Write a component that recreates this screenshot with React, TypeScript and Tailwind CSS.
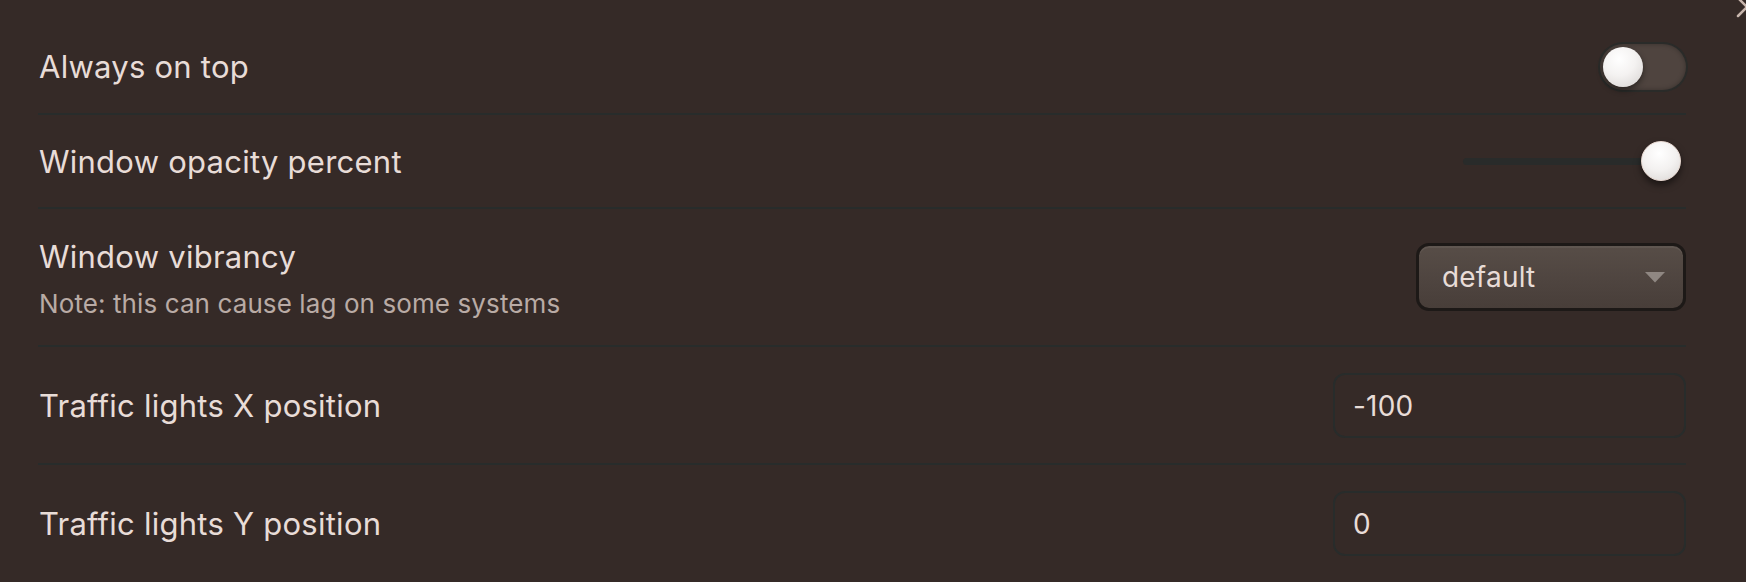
import React from "react";

const font = { fontFamily: "Inter, 'Noto Sans', sans-serif" };

function Toggle() {
  return (
    <div className="relative h-[46px] w-[86px] rounded-full bg-[#4f443f] shadow-[0_0_0_2px_#2a2b29,inset_0_0_5px_rgba(0,0,0,0.3)]">
      <div className="absolute left-[3px] top-[3px] h-[40px] w-[40px] rounded-full bg-[radial-gradient(circle_at_40%_30%,#ffffff_0%,#f4f2f1_45%,#d6d2d0_100%)] shadow-[0_3px_6px_rgba(0,0,0,0.45)]" />
    </div>
  );
}

function Slider() {
  return (
    <div className="relative flex h-[40px] w-[223px] items-center">
      <div className="h-[7px] w-[205px] rounded-full bg-[#292b2a]" />
      <div className="absolute right-[5px] top-[0px] h-[40px] w-[40px] rounded-full border border-[#eadbd4] bg-[radial-gradient(circle_at_45%_30%,#ffffff_0%,#f3f1f0_50%,#d9d5d3_100%)] shadow-[0_4px_7px_rgba(0,0,0,0.5)]" />
    </div>
  );
}

function Dropdown() {
  return (
    <div className="flex h-[68px] w-[270px] items-center justify-between rounded-[13px] border-[3px] border-[#1d1917] bg-[linear-gradient(180deg,#574d47_0%,#4e443f_60%,#483e39_100%)] pl-[23px] pr-[18px] shadow-[inset_0_2px_0_rgba(255,255,255,0.06)]">
      <span className="text-[28px] leading-none tracking-[0.2px] text-[#e8dcd7]" style={font}>default</span>
      <svg width="20" height="11" viewBox="0 0 20 11">
        <polygon points="0,0 20,0 10,10.5" fill="#8f8782" />
      </svg>
    </div>
  );
}

function Input({ value }: { value: string }) {
  return (
    <div className="flex h-[65px] w-[353px] items-center rounded-[12px] border-2 border-[#282c2b] pl-[18px] pt-[2px]">
      <span className="text-[28px] leading-none tracking-[0.2px] text-[#e8dcd7]" style={font}>{value}</span>
    </div>
  );
}

function Name({ children, className = "" }: { children: React.ReactNode; className?: string }) {
  return (
    <div className={"text-[31px] leading-none tracking-[0.25px] text-[#e8dcd7] " + className} style={font}>
      {children}
    </div>
  );
}

export default function App() {
  return (
    <div className="relative h-[582px] w-[1746px] overflow-hidden bg-[#352a27]">
      <svg
        className="absolute right-[-14px] top-[-6px]"
        width="26"
        height="26"
        viewBox="0 0 26 26"
        fill="none"
        stroke="#c8b6ad"
        strokeWidth="2.5"
        strokeLinecap="round"
      >
        <path d="M4 4 L22 22 M22 4 L4 22" />
      </svg>
      <div className="ml-[38px] w-[1648px] pt-[20px]">
        <div className="flex h-[95px] items-center justify-between border-b-2 border-[#282c2b] pl-[1px]">
          <Name>Always on top</Name>
          <Toggle />
        </div>
        <div className="flex h-[94px] items-center justify-between border-b-2 border-[#282c2b] pl-[1px]">
          <Name>Window opacity percent</Name>
          <Slider />
        </div>
        <div className="flex h-[138px] items-center justify-between border-b-2 border-[#282c2b] pl-[1px]">
          <div className="flex flex-col gap-[19px] pt-[4px]">
            <Name>Window vibrancy</Name>
            <div className="text-[26px] leading-none tracking-[0.1px] text-[#b9aba5]" style={font}>
              Note: this can cause lag on some systems
            </div>
          </div>
          <Dropdown />
        </div>
        <div className="flex h-[118px] items-center justify-between border-b-2 border-[#282c2b] pl-[1px]">
          <Name className="pt-[1px]">Traffic lights X position</Name>
          <Input value="-100" />
        </div>
        <div className="flex h-[116px] items-center justify-between pl-[1px]">
          <Name className="pt-[1px]">Traffic lights Y position</Name>
          <Input value="0" />
        </div>
      </div>
    </div>
  );
}
